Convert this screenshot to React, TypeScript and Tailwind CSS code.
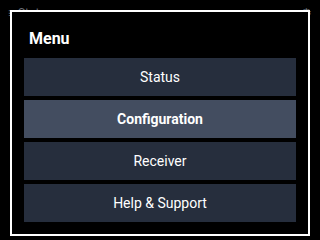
import { useState } from "react";

const items = ["Status", "Configuration", "Receiver", "Help & Support"];

export default function App() {
  const [active, setActive] = useState("Configuration");

  return (
    <div
      className="relative h-[240px] w-[320px] overflow-hidden bg-black text-white"
      style={{ fontFamily: "Roboto, 'Liberation Sans', sans-serif" }}
    >
      {/* page header behind the menu */}
      <div className="flex h-[20px] items-center justify-between px-[8px] pt-[6px] text-[12px] text-[#6b6f78]">
        <span>≡ Status</span>
        <span>⚙</span>
      </div>

      {/* Menu overlay */}
      <div className="absolute left-[10px] top-[10px] h-[226px] w-[300px] border-2 border-white bg-black px-[12px] pt-[15px]">
        <h2 className="mb-[7px] h-[24px] pl-[5px] text-[16px] font-bold leading-[24px]">
          Menu
        </h2>
        <div className="flex flex-col gap-[4px]">
          {items.map((item) => (
            <button
              key={item}
              type="button"
              onClick={() => setActive(item)}
              className={
                item === active
                  ? "h-[38px] w-full bg-[#434d60] text-[14px] font-bold text-white"
                  : "h-[38px] w-full bg-[#262e3d] text-[14px] text-white"
              }
            >
              {item}
            </button>
          ))}
        </div>
      </div>
    </div>
  );
}
